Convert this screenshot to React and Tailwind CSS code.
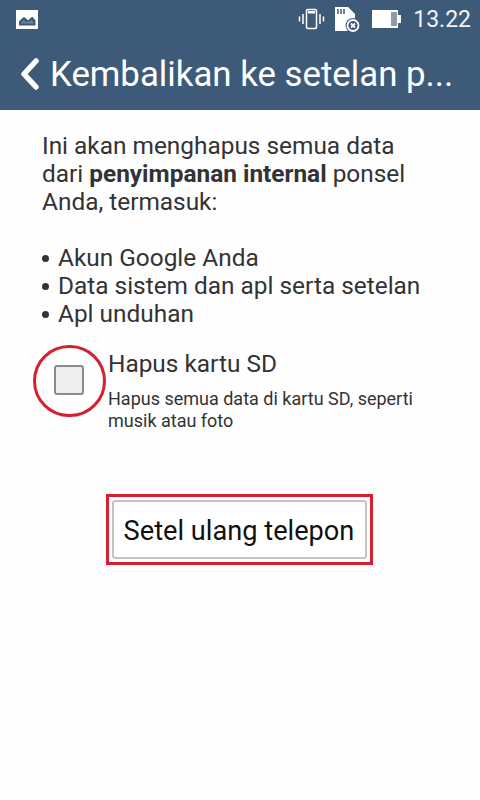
import React from "react";

function StatusBar() {
  return (
    <div className="flex items-center h-[38px] pl-4 pr-[9px]">
      <svg width="22" height="19" viewBox="0 0 22 19" className="shrink-0">
        <rect width="22" height="19" fill="#fff" />
        <path fill="#3e5a79" d="M3 15.500V11.500L6 8.500Q7.500 6.500 9 7.500L11 9.500Q12 10.500 13 9.500L15 7.500Q16.500 6.500 17.500 8L19.500 10.500V15.500z" />
        <path fill="#fff" d="M5 13.500V12.500L7.500 10.500L10.500 12L15.500 10.500L17.500 12V13.500z" fillOpacity="0.25" />
      </svg>
      <div className="ml-auto flex items-center">
        <svg width="28" height="22" viewBox="0 0 28 22" fill="none" stroke="#fff" className="shrink-0">
          <rect x="9.500" y="1.500" width="10" height="19" rx="1.500" strokeWidth="1.500" />
          <rect x="11" y="3" width="7" height="2.500" fill="#fff" stroke="none" />
          <path d="M6 6v10M2.500 8.500v5M23 6v10M26.500 8.500v5" strokeWidth="1.500" />
        </svg>
        <svg width="26" height="26" viewBox="0 0 26 26" className="ml-[9px] shrink-0">
          <path fill="#fff" d="M1 1h13l7 7v17H1z" />
          <path stroke="#3e5a79" strokeWidth="1.500" d="M4 3v5M7 3v5M10 3v5" />
          <circle cx="19" cy="19.500" r="7.500" fill="#3e5a79" />
          <circle cx="19" cy="19.500" r="5.500" fill="none" stroke="#fff" strokeWidth="1.800" />
          <path stroke="#fff" strokeWidth="1.800" d="M17 17.500l4 4M21 17.500l-4 4" />
        </svg>
        <svg width="30" height="20" viewBox="0 0 30 20" className="ml-[12px] shrink-0">
          <path fill="#fff" d="M0 1h26v5h3v8h-3v5H0z" />
          <rect x="19" y="3" width="6" height="14" fill="#8b9aae" />
        </svg>
        <span className="ml-[11px] text-[23px] leading-none text-[#f1f4f7] font-['Roboto',sans-serif]">13.22</span>
      </div>
    </div>
  );
}

export default function App() {
  return (
    <div className="w-[480px] h-[800px] bg-[#fefefe] font-['Roboto',sans-serif] overflow-hidden">
      <header className="h-[110px] bg-[#3e5a79] text-white">
        <StatusBar />
        <div className="flex items-center pl-[20px] mt-[16px]">
          <svg width="20" height="32" viewBox="0 0 20 32" fill="none" stroke="#fff" strokeWidth="5.500" strokeLinecap="round" strokeLinejoin="round" className="shrink-0">
            <path d="M16 3L4 16l12 13" />
          </svg>
          <h1 className="ml-[10px] text-[34.800px] leading-[40px] whitespace-nowrap">Kembalikan ke setelan p...</h1>
        </div>
      </header>

      <main className="pl-[42px] pt-[22px] text-[#333]">
        <p className="text-[24.400px] leading-[28px]">
          Ini akan menghapus semua data
          <br />
          dari <b className="font-bold">penyimpanan internal</b> ponsel
          <br />
          Anda, termasuk:
        </p>
        <ul className="mt-[28px] text-[24.400px] leading-[28px]">
          {["Akun Google Anda", "Data sistem dan apl serta setelan", "Apl unduhan"].map((item) => (
            <li key={item} className="flex items-center">
              <span className="w-[7px] h-[7px] mr-[9px] rounded-full bg-[#333]" />
              {item}
            </li>
          ))}
        </ul>

        <div className="flex mt-[22px] ml-[7px]">
          <div className="relative w-[40px] h-[40px] mt-[10px] flex items-center justify-center shrink-0">
            <div className="w-[30px] h-[30px] rounded-[3px] border-2 border-[#8a8a8a] bg-[#eeeeee]" />
            <div className="absolute left-[-16px] top-[-15px] w-[73px] h-[72px] rounded-full border-[3px] border-[#d5202f]" />
          </div>
          <div className="ml-[19px]">
            <div className="text-[24.400px] leading-[28px]">Hapus kartu SD</div>
            <div className="mt-[10px] text-[18px] leading-[22px]">
              Hapus semua data di kartu SD, seperti
              <br />
              musik atau foto
            </div>
          </div>
        </div>
      </main>

      <div className="flex justify-center mt-[62px]">
        <div className="w-[267px] h-[71px] -ml-[2px] border-[3px] border-[#d5202f] p-[3px]">
          <button className="w-full h-full pt-[4px] bg-white border-2 border-[#c4c4c4] rounded-[3px] text-[#111] text-[27.200px] leading-none">
            Setel ulang telepon
          </button>
        </div>
      </div>
    </div>
  );
}
